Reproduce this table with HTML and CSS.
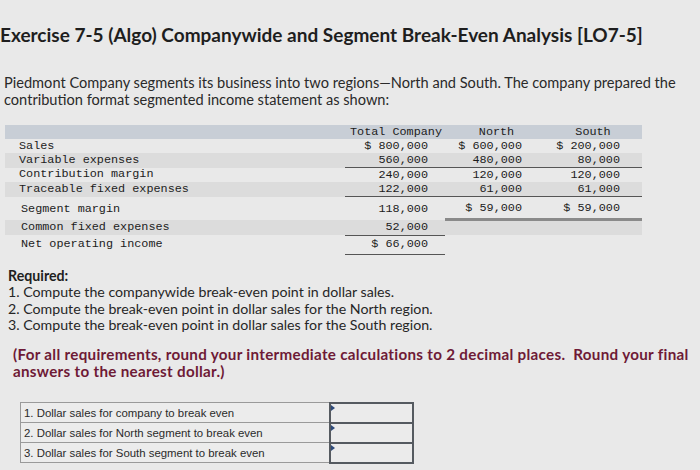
FILE: index.html
```html
<!DOCTYPE html>
<html>
<head>
<meta charset="utf-8">
<link rel="stylesheet" href="styles.css">
</head>
<body>
<h1 class="title">Exercise 7-5 (Algo) Companywide and Segment Break-Even Analysis [LO7-5]</h1>
<p class="intro">Piedmont Company segments its business into two regions—North and South. The company prepared the contribution format segmented income statement as shown:</p>

<table class="stmt">
  <colgroup><col class="c-label"><col class="c-total"><col class="c-north"><col class="c-south"></colgroup>
  <tr class="head"><td></td><td class="h">Total Company</td><td class="h">North</td><td class="h">South</td></tr>
  <tr class="r-a"><td class="lab">Sales</td><td class="n t">$ 800,000</td><td class="n no">$ 600,000</td><td class="n so">$ 200,000</td></tr>
  <tr class="r-a alt"><td class="lab">Variable expenses</td><td class="n t ul">560,000</td><td class="n no ul">480,000</td><td class="n so ul">80,000</td></tr>
  <tr class="r-b"><td class="lab">Contribution margin</td><td class="n t">240,000</td><td class="n no">120,000</td><td class="n so">120,000</td></tr>
  <tr class="r-a alt"><td class="lab">Traceable fixed expenses</td><td class="n t ul">122,000</td><td class="n no ul">61,000</td><td class="n so ul">61,000</td></tr>
  <tr class="r-seg"><td class="lab lab2">Segment margin</td><td class="n t">118,000</td><td class="n no dbl">$ 59,000</td><td class="n so dbl">$ 59,000</td></tr>
  <tr class="r-com alt"><td class="lab lab2">Common fixed expenses</td><td class="n t ul">52,000</td><td></td><td></td></tr>
  <tr class="r-net"><td class="lab lab2">Net operating income</td><td class="n t ul">$ 66,000</td><td></td><td></td></tr>
</table>

<div class="req">
  <div class="req-head">Required:</div>
  <div>1. Compute the companywide break-even point in dollar sales.</div>
  <div>2. Compute the break-even point in dollar sales for the North region.</div>
  <div>3. Compute the break-even point in dollar sales for the South region.</div>
</div>

<p class="note">(For all requirements, round your intermediate calculations to 2 decimal places.&nbsp; Round your final answers to the nearest dollar.)</p>

<table class="ans">
  <tr><td class="q">1. Dollar sales for company to break even</td><td class="inp"><span class="mark"></span></td></tr>
  <tr><td class="q">2. Dollar sales for North segment to break even</td><td class="inp"><span class="mark"></span></td></tr>
  <tr><td class="q">3. Dollar sales for South segment to break even</td><td class="inp"><span class="mark"></span></td></tr>
</table>
</body>
</html>
```

FILE: styles.css
```css
html, body {
  margin: 0;
  padding: 0;
  background: #e9e9e9;
  color: #232323;
  font-family: Lato, "Open Sans", sans-serif;
}
body {
  width: 700px;
  height: 470px;
  overflow: hidden;
}
.title {
  margin: 24px 0 0 0;
  font-size: 19px;
  font-weight: 700;
  line-height: 22px;
  color: #1e1e1e;
}
.intro {
  margin: 28px 0 0 4px;
  font-size: 14.6px;
  line-height: 17px;
  color: #2a2a2a;
  width: 696px;
}
.stmt {
  margin: 17px 0 0 5px;
  border-collapse: collapse;
  table-layout: fixed;
  width: 637px;
  font-family: "Liberation Mono", monospace;
  font-size: 11.8px;
  color: #1c1c1c;
}
.c-label { width: 340px; }
.c-total { width: 100px; }
.c-north { width: 95px; }
.c-south { width: 102px; }
.stmt td {
  padding: 0;
  line-height: 13px;
  white-space: nowrap;
  vertical-align: middle;
}
.head td { background: #c8ced6; height: 14px; }
.h { text-align: center; }
.head .h:nth-child(2) { padding-left: 2px; }
.head .h:nth-child(3) { padding-left: 8px; }
.head .h:nth-child(4) { padding-left: 4px; }
.r-a td { height: 14px; }
.r-b td { height: 14px; }
.alt td { background: #dcdcdc; }
.r-seg td { height: 19px; padding-top: 2px; }
.r-com td { height: 14px; }
.r-net td { height: 18px; }
.lab { padding-left: 14px !important; }
.lab2 { padding-left: 16px !important; }
.n { text-align: right; }
.t { padding-right: 17px !important; }
.no { padding-right: 18px !important; }
.so { padding-right: 22px !important; }
.ul { border-bottom: 1px solid #555; }
.dbl { border-bottom: 3px solid #8a8a8a; }
.req {
  margin: 13px 0 0 8px;
  font-size: 14.2px;
  line-height: 16.5px;
  color: #262626;
}
.req-head { font-weight: 700; color: #1e1e1e; }
.note {
  margin: 12px 0 0 13px;
  width: 684px;
  font-size: 15.2px;
  letter-spacing: 0.3px;
  line-height: 17px;
  font-weight: 700;
  color: #6e1a36;
}
.ans {
  margin: 22px 0 0 20px;
  border-collapse: collapse;
  font-family: "Liberation Sans", Arial, sans-serif;
  font-size: 11.4px;
  color: #2a2a2a;
}
.ans td { height: 18px; padding: 0; }
.q {
  width: 305px;
  padding-left: 3px !important;
  border: 1px solid #9a9a9a;
  background: #ececec;
}
.inp {
  width: 81px;
  border: 2px solid #555a60;
  background: #ebebeb;
  position: relative;
}
.mark {
  position: absolute;
  left: 0;
  top: 1px;
  width: 0;
  height: 0;
  border-top: 3px solid transparent;
  border-bottom: 3px solid transparent;
  border-left: 4px solid #2e4a7a;
}
```
